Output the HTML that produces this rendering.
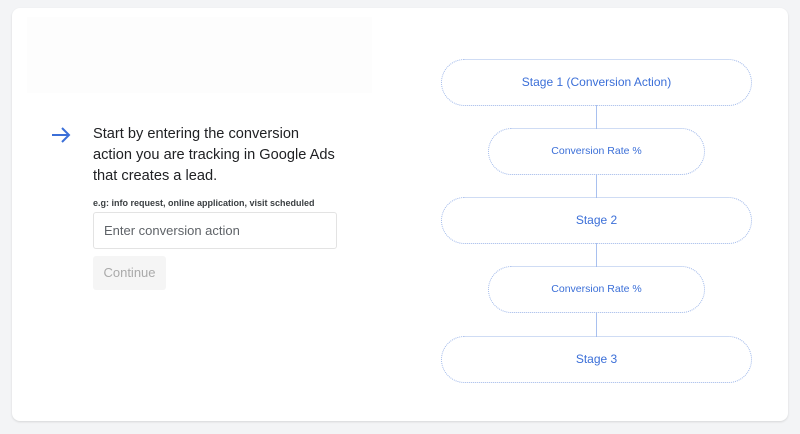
<!DOCTYPE html>
<html><head><style>
body{margin:0;width:800px;height:434px;background:#f3f4f6;font-family:"Liberation Sans",sans-serif;position:relative;overflow:hidden}
.card{position:absolute;left:12px;top:8px;width:776px;height:413px;background:#fff;border-radius:8px;box-shadow:0 1px 2px rgba(0,0,0,.12)}
.faint{position:absolute;left:27px;top:17px;width:345px;height:76px;background:#fdfdfd}
.t{position:absolute;left:93px;top:124px;font-size:14.6px;line-height:21px;color:#202124;white-space:nowrap}
.lbl{position:absolute;left:93px;top:198px;font-size:9px;color:#3c4043;font-weight:bold}
.in{position:absolute;left:93px;top:212px;width:242px;height:35px;border:1px solid #e3e3e3;border-radius:3px;font-size:13px;color:#5f6368;line-height:35px;box-sizing:content-box}
.in span{padding-left:10px}
.btn{position:absolute;left:93px;top:256px;width:73px;height:34px;background:#f5f5f5;border-radius:3px;font-size:13px;color:#aaa;text-align:center;line-height:34px}
.p{position:absolute;border:1px dotted #9fb8ea;border-radius:24px;color:#3b6fd8;text-align:center;box-sizing:border-box}
.s{left:441px;width:311px;height:47px;line-height:45px;font-size:12px}
.r{left:488px;width:217px;height:47px;line-height:45px;font-size:10.5px}
.ln{position:absolute;left:596px;width:1px;background:#a8c0ef}
</style></head><body>
<div class="card"></div>
<div class="faint"></div>
<svg style="position:absolute;left:51px;top:126px" width="20" height="18" viewBox="0 0 20 18"><path d="M1 9H18M11 2L18 9L11 16" fill="none" stroke="#3b6fd8" stroke-width="2"/></svg>
<div class="t">Start by entering the conversion<br>action you are tracking in Google Ads<br>that creates a lead.</div>
<div class="lbl">e.g: info request, online application, visit scheduled</div>
<div class="in"><span>Enter conversion action</span></div>
<div class="btn">Continue</div>
<div class="ln" style="top:105px;height:24px"></div>
<div class="ln" style="top:175px;height:23px"></div>
<div class="ln" style="top:243px;height:24px"></div>
<div class="ln" style="top:313px;height:24px"></div>
<div class="p s" style="top:59px">Stage 1 (Conversion Action)</div>
<div class="p r" style="top:128px">Conversion Rate %</div>
<div class="p s" style="top:197px">Stage 2</div>
<div class="p r" style="top:266px">Conversion Rate %</div>
<div class="p s" style="top:336px">Stage 3</div>
</body></html>
